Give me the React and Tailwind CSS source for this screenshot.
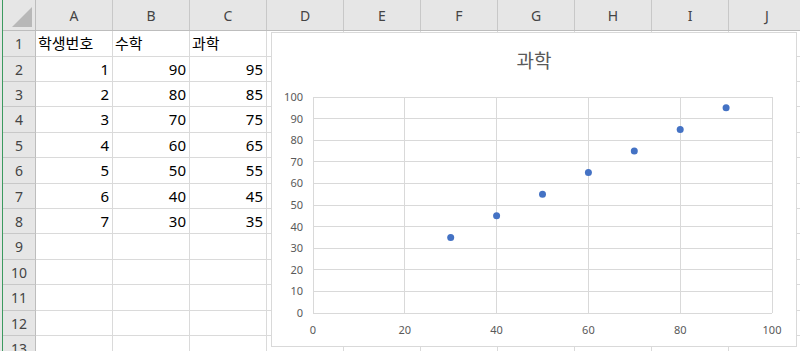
import React from "react";

const cols = ["A", "B", "C", "D", "E", "F", "G", "H", "I", "J"];
const rowHeights = ["h-[26px]", "h-[25px]", "h-[25px]", "h-[26px]", "h-[25px]", "h-[26px]", "h-[25px]", "h-[25px]", "h-[26px]", "h-[25px]", "h-[26px]", "h-[25px]", "h-[25px]"];

const data = [
  ["학생번호", "수학", "과학"],
  [1, 90, 95],
  [2, 80, 85],
  [3, 70, 75],
  [4, 60, 65],
  [5, 50, 55],
  [6, 40, 45],
  [7, 30, 35],
];

const font = { fontFamily: '"Noto Sans", "Noto Sans CJK KR", sans-serif' };

const Cell = ({ value }) => {
  const isNum = typeof value === "number";
  return (
    <div
      className={`w-[77px] shrink-0 border-r border-b border-[#dadada] flex items-center text-[15px] text-black leading-none ${
        isNum ? "justify-end pr-[3px]" : "justify-start pl-[2px]"
      }`}
    >
      {value ?? ""}
    </div>
  );
};

const Chart = () => {
  const L = 41, R = 500, T = 64, B = 280;
  const px = (v) => L + (v / 100) * (R - L);
  const py = (v) => B - (v / 100) * (B - T);
  const yTicks = [0, 10, 20, 30, 40, 50, 60, 70, 80, 90, 100];
  const xTicks = [0, 20, 40, 60, 80, 100];
  const points = data.slice(1).map((r) => [r[1], r[2]]);

  return (
    <div className="absolute left-[271px] top-[32px] w-[526px] h-[315px] bg-white border border-[#d9d9d9]">
      <div className="absolute left-0 right-0 top-[14px] text-center text-[19px] text-[#595959]" style={font}>
        과학
      </div>
      <svg width="526" height="315" className="block" style={font}>
        {yTicks.map((t) => (
          <line key={"y" + t} x1={L} x2={R} y1={py(t)} y2={py(t)} stroke="#d9d9d9" strokeWidth="1" shapeRendering="crispEdges" />
        ))}
        {xTicks.map((t) => (
          <line key={"x" + t} x1={px(t)} x2={px(t)} y1={T} y2={B} stroke="#d9d9d9" strokeWidth="1" shapeRendering="crispEdges" />
        ))}
        {yTicks.map((t) => (
          <text key={"yl" + t} x={31} y={py(t) + 4} textAnchor="end" fontSize="11" fill="#595959">
            {t}
          </text>
        ))}
        {xTicks.map((t) => (
          <text key={"xl" + t} x={px(t)} y={301} textAnchor="middle" fontSize="11" fill="#595959">
            {t}
          </text>
        ))}
        {points.map(([x, y]) => (
          <circle key={x} cx={px(x)} cy={py(y)} r="3.5" fill="#4472c4" />
        ))}
      </svg>
    </div>
  );
};

export default function App() {
  return (
    <div className="relative w-[800px] h-[351px] overflow-hidden bg-white flex" style={font}>
      <div className="w-[2px] shrink-0 bg-[#e6e6e6]" />
      <div className="w-[1px] shrink-0 bg-[#3c9a5f]" />
      <div className="flex flex-col">
        {/* column headers */}
        <div className="flex h-[31px] shrink-0 bg-[#e6e6e6] border-b border-[#bdbdbd]">
          <div className="w-[33px] shrink-0 border-r border-[#bdbdbd] relative">
            <div className="absolute right-[3px] bottom-[3px] w-0 h-0 border-l-[20px] border-l-transparent border-b-[20px] border-b-[#b8b8b8]" />
          </div>
          {cols.map((c) => (
            <div key={c} className="w-[77px] shrink-0 border-r border-[#c8c8c8] flex items-center justify-center text-[14px] text-[#444] pt-[1px]">
              {c}
            </div>
          ))}
        </div>
        {rowHeights.map((h, i) => (
          <div key={i} className={`flex shrink-0 ${h}`}>
            <div className="w-[33px] shrink-0 bg-[#e6e6e6] border-r border-b border-r-[#bdbdbd] border-b-[#c8c8c8] flex items-center justify-center text-[14px] text-[#444]">
              {i + 1}
            </div>
            {cols.map((c, j) => (
              <Cell key={c} value={data[i] ? data[i][j] : undefined} />
            ))}
          </div>
        ))}
      </div>
      <Chart />
    </div>
  );
}
